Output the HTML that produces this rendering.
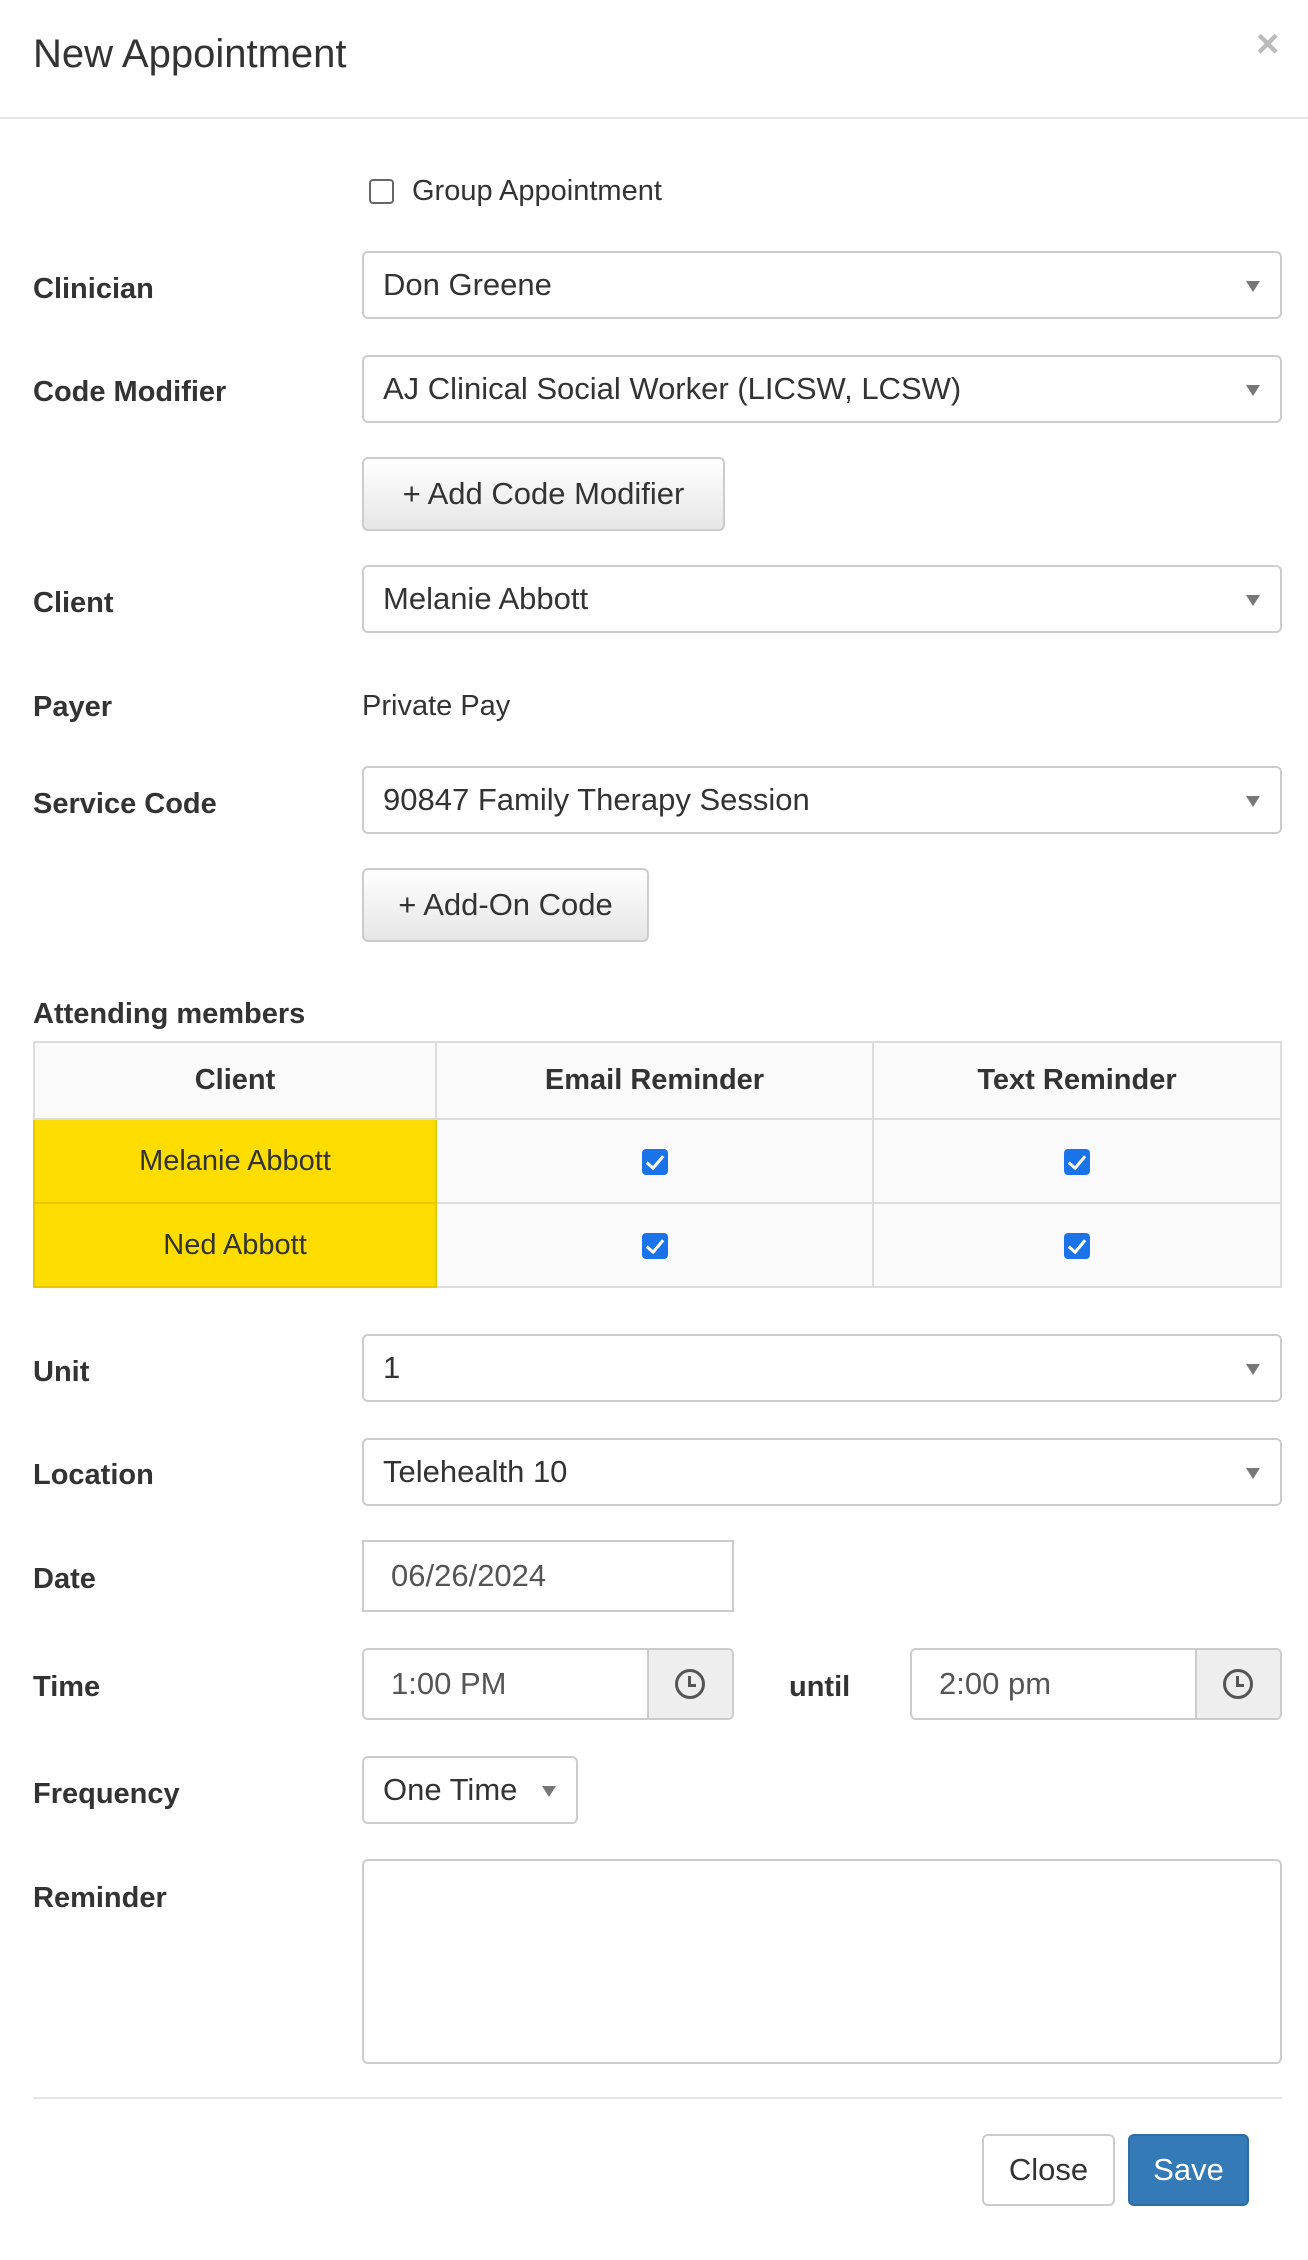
<!DOCTYPE html>
<html><head><meta charset="utf-8"><style>
*{box-sizing:border-box}
body{margin:0;width:1308px;height:2260px;background:#fff;font-family:"Liberation Sans",sans-serif;color:#333;position:relative;overflow:hidden}
.a{position:absolute}
.lbl{position:absolute;left:33px;font-weight:bold;font-size:29px;line-height:34px;color:#333}
.sel{position:absolute;left:362px;width:920px;height:68px;border:2px solid #ccc;border-radius:6px;font-size:31px;padding-left:19px;line-height:64px;color:#333}
.sel:after{content:"";position:absolute;right:20px;top:28px;border-left:7px solid transparent;border-right:7px solid transparent;border-top:11px solid #777}
.btn{position:absolute;left:362px;border:2px solid #ccc;border-radius:6px;background:linear-gradient(#fff,#e6e6e6);font-size:31px;text-align:center;color:#333}
.inp{position:absolute;border:2px solid #ccc;font-size:31px;color:#555;padding-left:27px}
table{position:absolute;left:33px;top:1041px;width:1249px;border-collapse:collapse;font-size:29px}
td,th{border:2px solid #ddd;text-align:center;background:#fafafa}
th{height:77px}
td{height:84px}
td.y{background:#fddd00;border-color:#e8c800}
.cb{display:inline-block;width:26px;height:26px;background:#1a73e8;border-radius:4px;position:relative;vertical-align:middle}
.cb:after{content:"";position:absolute;left:8px;top:3px;width:7px;height:14px;border:solid #fff;border-width:0 3px 3px 0;transform:rotate(40deg)}
.clk{position:absolute;width:30px;height:30px;border:3px solid #555;border-radius:50%}
.clk:before{content:"";position:absolute;left:10px;top:4px;width:3px;height:10px;background:#555}
.clk:after{content:"";position:absolute;left:10px;top:12px;width:8px;height:3px;background:#555}
</style></head><body>
<div class="a" style="left:33px;top:32px;font-size:40px;color:#333">New Appointment</div>
<div class="a" style="left:1256px;top:22px;font-size:40px;color:#bbb;font-weight:bold">×</div>
<div class="a" style="left:0;top:117px;width:1308px;height:2px;background:#e5e5e5"></div>

<div class="a" style="left:369px;top:179px;width:25px;height:25px;border:2px solid #666;border-radius:4px"></div>
<div class="a" style="left:412px;top:175px;font-size:29px;color:#333">Group Appointment</div>

<div class="lbl" style="top:272px">Clinician</div>
<div class="sel" style="top:251px">Don Greene</div>
<div class="lbl" style="top:375px">Code Modifier</div>
<div class="sel" style="top:355px">AJ Clinical Social Worker (LICSW, LCSW)</div>
<div class="btn" style="top:457px;width:363px;height:74px;line-height:70px">+ Add Code Modifier</div>
<div class="lbl" style="top:586px">Client</div>
<div class="sel" style="top:565px">Melanie Abbott</div>
<div class="lbl" style="top:690px">Payer</div>
<div class="a" style="left:362px;top:690px;font-size:29px">Private Pay</div>
<div class="lbl" style="top:787px">Service Code</div>
<div class="sel" style="top:766px">90847 Family Therapy Session</div>
<div class="btn" style="top:868px;width:287px;height:74px;line-height:70px">+ Add-On Code</div>

<div class="lbl" style="top:997px">Attending members</div>
<table>
<tr><th style="width:402px">Client</th><th style="width:437px">Email Reminder</th><th>Text Reminder</th></tr>
<tr><td class="y">Melanie Abbott</td><td><span class="cb"></span></td><td><span class="cb"></span></td></tr>
<tr><td class="y">Ned Abbott</td><td><span class="cb"></span></td><td><span class="cb"></span></td></tr>
</table>

<div class="lbl" style="top:1355px">Unit</div>
<div class="sel" style="top:1334px">1</div>
<div class="lbl" style="top:1458px">Location</div>
<div class="sel" style="top:1438px">Telehealth 10</div>
<div class="lbl" style="top:1562px">Date</div>
<div class="inp" style="left:362px;top:1540px;width:372px;height:72px;line-height:68px">06/26/2024</div>
<div class="lbl" style="top:1670px">Time</div>
<div class="inp" style="left:362px;top:1648px;width:372px;height:72px;line-height:68px;border-radius:6px">1:00 PM</div>
<div class="a" style="left:647px;top:1650px;width:85px;height:68px;background:#eee;border-left:2px solid #ccc;border-radius:0 5px 5px 0"></div>
<div class="clk" style="left:675px;top:1669px"></div>
<div class="lbl" style="left:789px;top:1670px">until</div>
<div class="inp" style="left:910px;top:1648px;width:372px;height:72px;line-height:68px;border-radius:6px">2:00 pm</div>
<div class="a" style="left:1195px;top:1650px;width:85px;height:68px;background:#eee;border-left:2px solid #ccc;border-radius:0 5px 5px 0"></div>
<div class="clk" style="left:1223px;top:1669px"></div>
<div class="lbl" style="top:1777px">Frequency</div>
<div class="sel" style="top:1756px;width:216px">One Time</div>
<div class="lbl" style="top:1881px">Reminder</div>
<div class="a" style="left:362px;top:1859px;width:920px;height:205px;border:2px solid #ccc;border-radius:6px"></div>
<div class="a" style="left:33px;top:2097px;width:1249px;height:2px;background:#e5e5e5"></div>
<div class="a" style="left:982px;top:2134px;width:133px;height:72px;border:2px solid #ccc;border-radius:6px;font-size:31px;text-align:center;line-height:68px">Close</div>
<div class="a" style="left:1128px;top:2134px;width:121px;height:72px;border:2px solid #2e6da4;border-radius:6px;background:#337ab7;color:#fff;font-size:31px;text-align:center;line-height:68px">Save</div>
</body></html>
